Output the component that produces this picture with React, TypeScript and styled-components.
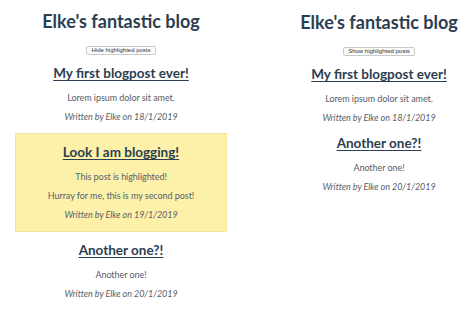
import styled, { createGlobalStyle } from 'styled-components'

const GlobalStyle = createGlobalStyle`
  html, body {
    margin: 0;
    padding: 0;
    background: #fff;
    overflow: hidden;
  }
  body {
    font-family: Lato, 'Noto Sans', sans-serif;
    color: #2c3e50;
    -webkit-font-smoothing: antialiased;
  }
`

const Page = styled.div`
  display: flex;
  width: 474px;
  height: 311px;
`

const Panel = styled.div<{ width: number; offset?: number; top?: number }>`
  flex: 0 0 ${({ width }) => width}px;
  margin-left: ${({ offset }) => offset || 0}px;
  display: flex;
  flex-direction: column;
  align-items: center;
  text-align: center;
  padding-top: ${({ top }) => top || 9}px;
`

const Title = styled.h1`
  margin: 0;
  font-size: 18px;
  line-height: 24px;
  font-weight: 700;
  color: #2c3e50;
  white-space: nowrap;
`

const ToggleButton = styled.button`
  margin-top: 13px;
  height: 9px;
  padding: 0 4px;
  border: 1px solid #c9c9c9;
  border-radius: 2px;
  background: #fbfbfb;
  font-family: 'Liberation Sans', Arial, sans-serif;
  font-size: 6px;
  line-height: 7px;
  color: #333;
  white-space: nowrap;
`

const PostList = styled.div`
  margin-top: 9px;
  display: flex;
  flex-direction: column;
  gap: 9px;
  align-self: stretch;
  padding: 0 15px;
`

const Post = styled.article<{ highlighted?: boolean }>`
  display: flex;
  flex-direction: column;
  align-items: center;
  padding: ${({ highlighted }) => (highlighted ? '9px 0' : '0')};
  background: ${({ highlighted }) => (highlighted ? '#fdf1aa' : 'transparent')};
  border: ${({ highlighted }) => (highlighted ? '1px solid #f3e49c' : 'none')};
`

const PostTitle = styled.h2`
  margin: 0 0 9px;
  font-size: 13.5px;
  line-height: 18px;
  font-weight: 700;
  text-decoration: underline;
  text-underline-offset: 2px;
  text-decoration-thickness: 1px;
  color: #2c3e50;
  white-space: nowrap;
`

const Text = styled.p<{ italic?: boolean }>`
  margin: 0 0 5px;
  font-size: 9px;
  letter-spacing: -0.05px;
  line-height: 14px;
  color: #56606b;
  font-style: ${({ italic }) => (italic ? 'italic' : 'normal')};
  white-space: nowrap;
  &:last-child {
    margin-bottom: 0;
  }
`

type PostData = {
  title: string
  lines: string[]
  date: string
  highlighted?: boolean
}

const posts: PostData[] = [
  { title: 'My first blogpost ever!', lines: ['Lorem ipsum dolor sit amet.'], date: '18/1/2019' },
  {
    title: 'Look I am blogging!',
    lines: ['This post is highlighted!', 'Hurray for me, this is my second post!'],
    date: '19/1/2019',
    highlighted: true,
  },
  { title: 'Another one?!', lines: ['Another one!'], date: '20/1/2019' },
]

const Blog = ({ showHighlighted }: { showHighlighted: boolean }) => (
  <>
    <Title>Elke's fantastic blog</Title>
    <ToggleButton>{showHighlighted ? 'Hide highlighted posts' : 'Show highlighted posts'}</ToggleButton>
    <PostList>
      {posts
        .filter((post) => showHighlighted || !post.highlighted)
        .map((post) => (
          <Post key={post.title} highlighted={post.highlighted}>
            <PostTitle>{post.title}</PostTitle>
            {post.lines.map((line) => (
              <Text key={line}>{line}</Text>
            ))}
            <Text italic>Written by Elke on {post.date}</Text>
          </Post>
        ))}
    </PostList>
  </>
)

export default function App() {
  return (
    <Page>
      <GlobalStyle />
      <Panel width={242}>
        <Blog showHighlighted />
      </Panel>
      <Panel width={190} offset={42} top={10}>
        <Blog showHighlighted={false} />
      </Panel>
    </Page>
  )
}
